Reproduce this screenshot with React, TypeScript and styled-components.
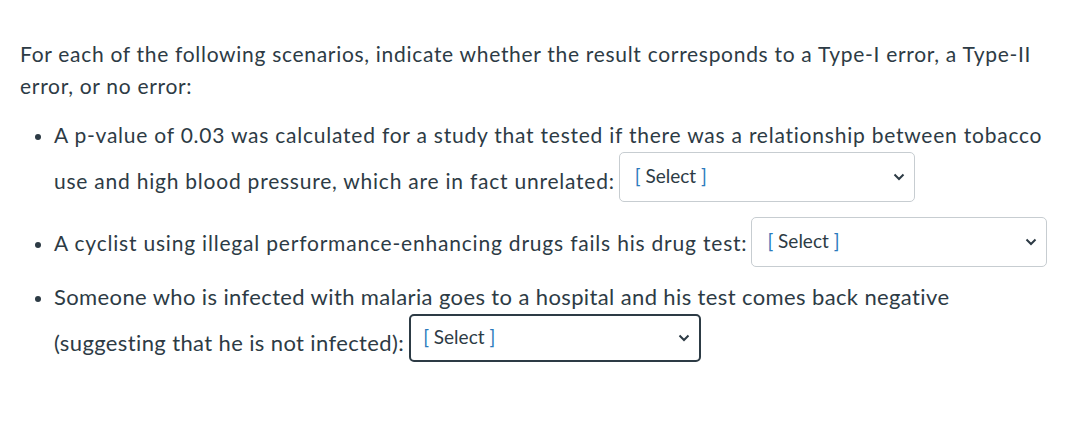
import styled, { createGlobalStyle } from "styled-components";

const GlobalStyle = createGlobalStyle`
  body {
    margin: 0;
    background: #ffffff;
    font-family: Lato, "Open Sans", sans-serif;
    color: #2d3b45;
  }
`;

const Page = styled.div`
  width: 1030px;
  padding: 38px 0 0 20px;
`;

const Intro = styled.p`
  margin: 0 0 16px;
  font-size: 21px;
  line-height: 32px;
  letter-spacing: 0.7px;
`;

const List = styled.ul`
  margin: 0;
  padding-left: 34px;

  & li::marker {
    font-size: 18px;
    letter-spacing: 0;
  }
`;

const Item = styled.li<{ $size: number; $spacing: number; $gap: number }>`
  margin-bottom: ${(p) => p.$gap}px;
  font-size: ${(p) => p.$size}px;
  line-height: 34px;
  letter-spacing: ${(p) => p.$spacing}px;
`;

const SelectBox = styled.span<{ $width: number; $focused?: boolean; $lift: number }>`
  display: inline-flex;
  align-items: center;
  justify-content: space-between;
  box-sizing: border-box;
  width: ${(p) => p.$width}px;
  height: ${(p) => (p.$focused ? 48 : 50)}px;
  margin-left: ${(p) => (p.$focused ? 5 : 4)}px;
  padding: 0 9px 0 ${(p) => (p.$focused ? 12 : 15)}px;
  border: ${(p) => (p.$focused ? "2px solid #2d3b45" : "1px solid #c7cdd1")};
  border-radius: 5px;
  background: #ffffff;
  vertical-align: ${(p) => p.$lift}px;
  font-size: 19px;
  line-height: 1;
  letter-spacing: 0;
  color: #2d3b45;
`;

const SelectLabel = styled.span`
  position: relative;
  top: -2px;

  & b {
    font-weight: 400;
    color: #2b7abc;
  }
`;

function Chevron() {
  return (
    <svg width="12" height="8" viewBox="0 0 12 8" fill="none">
      <path d="M1.5 1.5 6 6l4.5-4.5" stroke="#2d3b45" strokeWidth="2" />
    </svg>
  );
}

function Select({ width, focused, lift }: { width: number; focused?: boolean; lift: number }) {
  return (
    <SelectBox $width={width} $focused={focused} $lift={lift}>
      <SelectLabel>
        <b>[</b> Select <b>]</b>
      </SelectLabel>
      <Chevron />
    </SelectBox>
  );
}

export default function App() {
  return (
    <Page>
      <GlobalStyle />
      <Intro>
        For each of the following scenarios, indicate whether the result corresponds to a Type-I
        error, a Type-II error, or no error:
      </Intro>
      <List>
        <Item $size={21} $spacing={0.77} $gap={15}>
          A p-value of 0.03 was calculated for a study that tested if there was a relationship
          between tobacco use and high blood pressure, which are in fact unrelated:
          <Select width={296} lift={4} />
        </Item>
        <Item $size={21} $spacing={0.8} $gap={13}>
          A cyclist using illegal performance-enhancing drugs fails his drug test:
          <Select width={296} lift={1} />
        </Item>
        <Item $size={22} $spacing={0.38} $gap={0}>
          Someone who is infected with malaria goes to a hospital and his test comes back negative
          (suggesting that he is not infected):
          <Select width={292} focused lift={5} />
        </Item>
      </List>
    </Page>
  );
}
